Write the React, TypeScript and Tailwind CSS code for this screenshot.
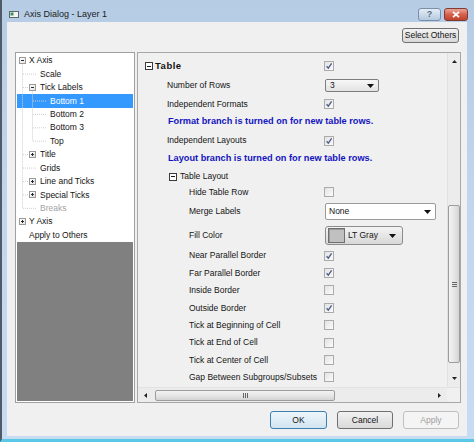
import React from 'react';

type TreeItem = {
  label: string;
  level: 0 | 1 | 2;
  box?: '+' | '-';
  selected?: boolean;
  disabled?: boolean;
};

const TREE: TreeItem[] = [
  { label: 'X Axis', level: 0, box: '-' },
  { label: 'Scale', level: 1 },
  { label: 'Tick Labels', level: 1, box: '-' },
  { label: 'Bottom 1', level: 2, selected: true },
  { label: 'Bottom 2', level: 2 },
  { label: 'Bottom 3', level: 2 },
  { label: 'Top', level: 2 },
  { label: 'Title', level: 1, box: '+' },
  { label: 'Grids', level: 1 },
  { label: 'Line and Ticks', level: 1, box: '+' },
  { label: 'Special Ticks', level: 1, box: '+' },
  { label: 'Breaks', level: 1, disabled: true },
  { label: 'Y Axis', level: 0, box: '+' },
  { label: 'Apply to Others', level: 0 },
];

const ROW_H = 13.42;
const cy = (i: number) => ROW_H * i + ROW_H / 2;

// gutter width before the label, and where the +/- box sits inside it
const GUTTER = ['w-[12px]', 'w-[23px]', 'w-[33px]'];
const BOX_ML = ['ml-[2px]', 'ml-[12px]', 'ml-[22px]'];

const TreeBox = ({ sign }: { sign: '+' | '-' }) => (
  <span className="w-[7px] h-[7px] border border-[#9a9a9a] bg-gradient-to-br from-white to-[#e4e4e4] relative flex items-center justify-center">
    <span className="w-[3px] h-px bg-[#2b2b2b]" />
    {sign === '+' && <span className="absolute w-px h-[3px] bg-[#2b2b2b]" />}
  </span>
);

const TreeLines = () => {
  const h = (i: number, x2: number) => (
    <line key={`h${i}`} x1={6} y1={cy(i)} x2={x2} y2={cy(i)} />
  );
  return (
    <svg
      className="absolute top-0 left-0 pointer-events-none"
      width={116}
      height={ROW_H * TREE.length}
      stroke="#cfcfcf"
      strokeWidth={1}
      strokeDasharray="1 1"
    >
      <line x1={5.5} y1={cy(0) + 4} x2={5.5} y2={cy(11)} />
      {[1, 8, 11].map((i) => h(i, 20))}
      {[2, 7, 9, 10].map((i) => h(i, 12))}
      <line x1={15.5} y1={cy(2) + 4} x2={15.5} y2={cy(6)} />
      {[3, 4, 5, 6].map((i) => (
        <line key={`l${i}`} x1={16} y1={cy(i)} x2={30} y2={cy(i)} />
      ))}
    </svg>
  );
};

const Tree = () => (
  <div className="w-[120px] h-full border border-[#a0a0a0] flex">
    <div className="flex-1 border border-white flex flex-col">
      <div className="relative bg-white">
        {TREE.map((t) => (
          <div
            key={t.label}
            className={`h-[13.42px] flex items-center ${t.selected ? 'bg-[#3399ff] text-white' : ''} ${t.disabled ? 'text-[#a3a3a3]' : ''}`}
          >
            <div className={`${GUTTER[t.level]} shrink-0 flex items-center`}>
              {t.box && (
                <span className={BOX_ML[t.level]}>
                  <TreeBox sign={t.box} />
                </span>
              )}
            </div>
            <span className="whitespace-nowrap">{t.label}</span>
          </div>
        ))}
        <TreeLines />
      </div>
      <div className="flex-1 bg-[#808080]" />
    </div>
  </div>
);

const Check = ({ checked }: { checked?: boolean }) => (
  <span className="w-[10px] h-[10px] border border-[#ababab] bg-gradient-to-br from-[#e3e3e3] to-[#fbfbfb] flex items-center justify-center">
    {checked && (
      <svg width="8" height="8" viewBox="0 0 8 8">
        <path d="M1.6 4.3 L3.3 6.2 L6.6 1.4" stroke="#4a5c86" strokeWidth="1.3" fill="none" />
      </svg>
    )}
  </span>
);

const DownArrow = () => (
  <svg width="7" height="4" viewBox="0 0 7 4">
    <path d="M0 0H7L3.5 4Z" fill="#111" />
  </svg>
);

const PanelBox = () => (
  <span className="w-[8px] h-[8px] border border-[#3a3a3a] bg-white flex items-center justify-center">
    <span className="w-[4px] h-px bg-[#1a1a1a]" />
  </span>
);

const CheckRow = ({ label, checked }: { label: string; checked?: boolean }) => (
  <div className="h-[17.4px] flex items-center">
    <span className="w-[186px] shrink-0 pl-[51px] whitespace-nowrap">{label}</span>
    <Check checked={checked} />
  </div>
);

const Note = ({ children }: { children: React.ReactNode }) => (
  <span className="pl-[30px] font-bold text-[9.2px] text-[#1414c0] whitespace-nowrap">{children}</span>
);

const PanelContent = () => (
  <div className="w-[309px] h-full overflow-hidden pt-[3px] flex flex-col">
    <div className="h-[20px] flex items-center">
      <div className="w-[186px] shrink-0 flex items-center pl-[7px]">
        <PanelBox />
        <span className="ml-[2px] font-bold text-[9.5px] tracking-[0.5px]">Table</span>
      </div>
      <Check checked />
    </div>
    <div className="h-[19px] flex items-center">
      <span className="w-[186px] shrink-0 pl-[29px]">Number of Rows</span>
      <div className="ml-px w-[54px] h-[13px] border border-[#7d7d7d] rounded-[2px] bg-gradient-to-b from-[#f7f7f7] to-[#e2e2e2] flex items-center justify-between pl-[4px] pr-[4px]">
        <span>3</span>
        <DownArrow />
      </div>
    </div>
    <div className="h-[18px] flex items-center">
      <span className="w-[186px] shrink-0 pl-[29px]">Independent Formats</span>
      <Check checked />
    </div>
    <div className="h-[18px] flex items-center">
      <Note>Format branch is turned on for new table rows.</Note>
    </div>
    <div className="h-[19px] flex items-center">
      <span className="w-[186px] shrink-0 pl-[29px]">Independent Layouts</span>
      <Check checked />
    </div>
    <div className="h-[18px] flex items-center">
      <Note>Layout branch is turned on for new table rows.</Note>
    </div>
    <div className="h-[17px] flex items-center pl-[31px]">
      <PanelBox />
      <span className="ml-[3px]">Table Layout</span>
    </div>
    <div className="h-[14px] flex items-center">
      <span className="w-[186px] shrink-0 pl-[51px]">Hide Table Row</span>
      <Check />
    </div>
    <div className="h-[25px] flex items-center">
      <span className="w-[186px] shrink-0 pl-[51px]">Merge Labels</span>
      <div className="ml-px w-[111px] h-[17px] border border-[#9a9a9a] rounded-[2px] bg-white flex items-center justify-between pl-[3px] pr-[4px]">
        <span>None</span>
        <DownArrow />
      </div>
    </div>
    <div className="h-[23px] flex items-center">
      <span className="w-[186px] shrink-0 pl-[51px]">Fill Color</span>
      <div className="ml-px w-[78px] h-[19px] border border-[#8c8c8c] rounded-[3px] bg-gradient-to-b from-[#f4f4f4] to-[#d8d8d8] flex items-center pl-[2px] pr-[6px]">
        <span className="w-[17px] h-[15px] bg-[#c0c0c0] border border-[#6f6f6f] shadow-[inset_1px_1px_0_#9a9a9a]" />
        <span className="ml-[3px]">LT Gray</span>
        <span className="ml-auto">
          <DownArrow />
        </span>
      </div>
    </div>
    <CheckRow label="Near Parallel Border" checked />
    <CheckRow label="Far Parallel Border" checked />
    <CheckRow label="Inside Border" />
    <CheckRow label="Outside Border" checked />
    <CheckRow label="Tick at Beginning of Cell" />
    <CheckRow label="Tick at End of Cell" />
    <CheckRow label="Tick at Center of Cell" />
    <CheckRow label="Gap Between Subgroups/Subsets" />
  </div>
);

const VScroll = () => (
  <div className="w-[13px] h-full flex flex-col bg-[#ececec] border-l border-[#e2e2e2]">
    <div className="h-[17px] flex items-center justify-center">
      <svg width="5" height="3" viewBox="0 0 5 3">
        <path d="M0 3H5L2.5 0Z" fill="#222" />
      </svg>
    </div>
    <div className="flex-1 flex flex-col pt-[135px]">
      <div className="h-[158px] border border-[#9c9c9c] rounded-[2px] bg-gradient-to-r from-[#f3f3f3] via-[#e6e6e6] to-[#d4d4d4] flex flex-col items-center justify-center gap-px">
        <span className="w-[5px] h-px bg-[#666]" />
        <span className="w-[5px] h-px bg-[#666]" />
        <span className="w-[5px] h-px bg-[#666]" />
      </div>
    </div>
    <div className="h-[17px] flex items-center justify-center">
      <svg width="5" height="3" viewBox="0 0 5 3">
        <path d="M0 0H5L2.5 3Z" fill="#222" />
      </svg>
    </div>
  </div>
);

const HScroll = () => (
  <div className="h-[15px] flex bg-[#ececec] border-t border-[#e2e2e2]">
    <div className="w-[15px] flex items-center justify-center">
      <svg width="3" height="5" viewBox="0 0 3 5">
        <path d="M3 0V5L0 2.5Z" fill="#222" />
      </svg>
    </div>
    <div className="w-[278px] flex items-center">
      <div className="ml-[2px] w-[180px] h-[11px] border border-[#9c9c9c] rounded-[2px] bg-gradient-to-b from-[#f3f3f3] via-[#e6e6e6] to-[#d4d4d4] flex items-center justify-center gap-px">
        <span className="w-px h-[5px] bg-[#666]" />
        <span className="w-px h-[5px] bg-[#666]" />
        <span className="w-px h-[5px] bg-[#666]" />
      </div>
    </div>
    <div className="w-[16px] flex items-center justify-center">
      <svg width="3" height="5" viewBox="0 0 3 5">
        <path d="M0 0V5L3 2.5Z" fill="#222" />
      </svg>
    </div>
    <div className="w-[13px] bg-[#f0f0f0]" />
  </div>
);

const Button = ({
  children,
  w,
  primary,
  disabled,
}: {
  children: React.ReactNode;
  w: string;
  primary?: boolean;
  disabled?: boolean;
}) => (
  <div
    className={`${w} h-[18px] rounded-[3px] border flex items-center justify-center ${
      primary
        ? 'border-[#3c7fb1] bg-gradient-to-b from-[#eef6fb] to-[#d2e4f0]'
        : disabled
          ? 'border-[#bfbfbf] bg-[#f4f4f4] text-[#a0a0a0]'
          : 'border-[#707070] bg-gradient-to-b from-[#f2f2f2] to-[#d9d9d9]'
    }`}
  >
    {children}
  </div>
);

const TitleBar = () => (
  <div className="h-[22px] pt-[6px] pl-[7px] pr-[6px] flex items-center">
    <svg width="10" height="7" viewBox="0 0 10 7" className="shrink-0">
      <rect x="0.5" y="0.5" width="9" height="6" fill="#f4f4f4" stroke="#5a6a6a" />
      <rect x="1.5" y="1.5" width="3" height="3" fill="#3f8f5c" />
    </svg>
    <span className="ml-[5px] text-[9px] text-[#1b1b1b] whitespace-nowrap">Axis Dialog - Layer 1</span>
    <div className="ml-auto self-start mt-[2px] flex gap-[3px]">
      <div className="w-[23px] h-[13px] rounded-[3px] border border-[#7b8fa8] bg-gradient-to-b from-[#e3edf7] to-[#b4c9df] flex items-center justify-center text-[9px] font-bold text-[#5b6b7c]">
        ?
      </div>
      <div className="w-[24px] h-[13px] rounded-[3px] border border-[#7e3b32] bg-gradient-to-b from-[#e9a497] via-[#d4604d] to-[#c0422e] flex items-center justify-center">
        <svg width="8" height="7" viewBox="0 0 8 7">
          <path d="M1 0.8L7 6.2M7 0.8L1 6.2" stroke="#fff" strokeWidth="1.8" />
        </svg>
      </div>
    </div>
  </div>
);

export default function App() {
  return (
    <div className="w-[474px] h-[442px] overflow-hidden flex flex-col bg-gradient-to-b from-[#b6cce5] via-[#c2d7ee] to-[#c6dcf2] border-l-2 border-l-[#4f5b67] border-b-[3px] border-b-[#58c8e6] font-['Liberation_Sans',Arial,sans-serif] text-[8.5px] leading-none text-[#141414]">
      <TitleBar />
      <div className="ml-[5px] mr-[7px] h-[414px] bg-[#f0f0f0] flex flex-col">
        <div className="pt-[6px] pr-[8px] flex justify-end">
          <div className="w-[57px] h-[15px] rounded-[3px] border border-[#707070] bg-gradient-to-b from-[#f2f2f2] to-[#d9d9d9] flex items-center justify-center">
            Select Others
          </div>
        </div>
        <div className="mt-[9px] h-[351px] pl-[8px] flex">
          <Tree />
          <div className="ml-[2px] w-[324px] h-full border border-[#a7a7a7] flex flex-col">
            <div className="h-[334px] flex">
              <PanelContent />
              <VScroll />
            </div>
            <HScroll />
          </div>
        </div>
        <div className="mt-[8px] pr-[8px] flex justify-end gap-[10px]">
          <Button w="w-[57px]" primary>
            OK
          </Button>
          <Button w="w-[56px]">Cancel</Button>
          <Button w="w-[56px]" disabled>
            Apply
          </Button>
        </div>
      </div>
    </div>
  );
}
